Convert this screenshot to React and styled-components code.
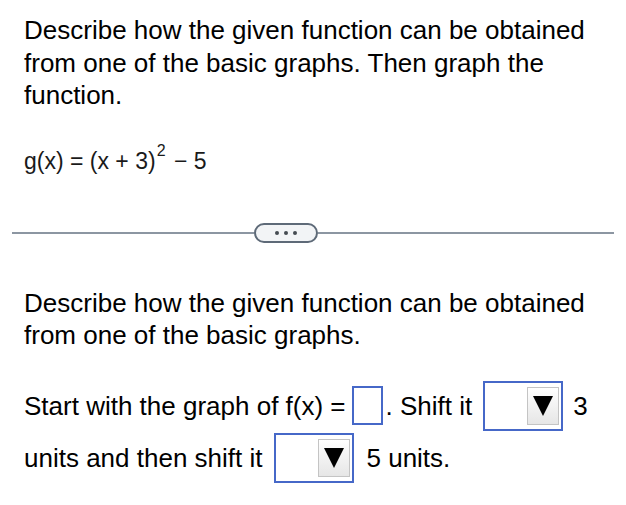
import React from "react";
import styled, { createGlobalStyle } from "styled-components";

const GlobalStyle = createGlobalStyle`
  html, body {
    margin: 0;
    padding: 0;
    background: #ffffff;
  }
  body {
    font-family: "Liberation Sans", Arial, sans-serif;
    color: #000000;
  }
`;

const Page = styled.div`
  width: 626px;
  padding: 14px 0 0;
`;

const Section = styled.div`
  padding: 0 24px;
`;

const Prompt = styled.p`
  margin: 0;
  font-size: 26px;
  line-height: 32.5px;
`;

const Formula = styled.p`
  margin: 34px 0 0;
  font-family: "Liberation Sans", Arial, sans-serif;
  font-size: 23px;
  line-height: 30px;
  color: #1a1a1a;

  sup {
    font-size: 16px;
    line-height: 0;
    position: relative;
    top: -4px;
    margin: 0 2px 0 1px;
  }
`;

const Divider = styled.div`
  margin: 47px 12px 0;
  display: flex;
  align-items: center;
  height: 20px;
`;

const Rule = styled.div`
  height: 2px;
  background: #8c96a2;
  flex: ${(p) => p.$grow};
`;

const MoreButton = styled.button`
  width: 64px;
  height: 20px;
  box-sizing: border-box;
  border: 2px solid #5e6a78;
  border-radius: 10px;
  background: #f2f4f6;
  padding: 0;
  display: flex;
  align-items: center;
  justify-content: center;
  gap: 5px;
`;

const Dot = styled.span`
  width: 4px;
  height: 4px;
  border-radius: 50%;
  background: #454b52;
`;

const SecondPrompt = styled(Prompt)`
  margin-top: 44px;
`;

const Answer = styled.p`
  margin: 29px 0 0;
  font-size: 26px;
  line-height: 51px;
`;

const Blank = styled.span`
  display: inline-block;
  vertical-align: middle;
  box-sizing: border-box;
  width: 31px;
  height: 39px;
  border: 2px solid #4668c8;
  margin: 0 3px 0 6px;
  position: relative;
  top: -2px;
`;

const Select = styled.span`
  display: inline-block;
  vertical-align: middle;
  box-sizing: border-box;
  width: 80px;
  height: 50px;
  border: 2px solid #4668c8;
  margin: ${(p) => p.$margin};
  position: relative;
  top: -2px;
  padding: 4px 2px 4px 0;
  text-align: right;
  line-height: 0;
`;

const Arrow = styled.span`
  box-sizing: border-box;
  width: 32px;
  height: 38px;
  border: 1px solid #c4c4c4;
  background: linear-gradient(#ffffff, #e6e6e6);
  display: inline-flex;
  align-items: center;
  justify-content: center;

  &::after {
    content: "";
    border-left: 10px solid transparent;
    border-right: 10px solid transparent;
    border-top: 20px solid #000000;
  }
`;

export default function App() {
  return (
    <Page>
      <GlobalStyle />
      <Section>
        <Prompt>
          Describe how the given function can be obtained from one of the basic
          graphs. Then graph the function.
        </Prompt>
        <Formula>
          g(x) = (x + 3)<sup>2</sup> − 5
        </Formula>
      </Section>
      <Divider>
        <Rule $grow="0 0 242px" />
        <MoreButton aria-label="more">
          <Dot />
          <Dot />
          <Dot />
        </MoreButton>
        <Rule $grow="1" />
      </Divider>
      <Section>
        <SecondPrompt>
          Describe how the given function can be obtained from one of the basic
          graphs.
        </SecondPrompt>
        <Answer>
          Start with the graph of f(x) =<Blank />. Shift it
          <Select $margin="0 10px 0 11px">
            <Arrow />
          </Select>
          3 units and then shift it
          <Select $margin="0 12px 0 12px">
            <Arrow />
          </Select>
          5 units.
        </Answer>
      </Section>
    </Page>
  );
}
